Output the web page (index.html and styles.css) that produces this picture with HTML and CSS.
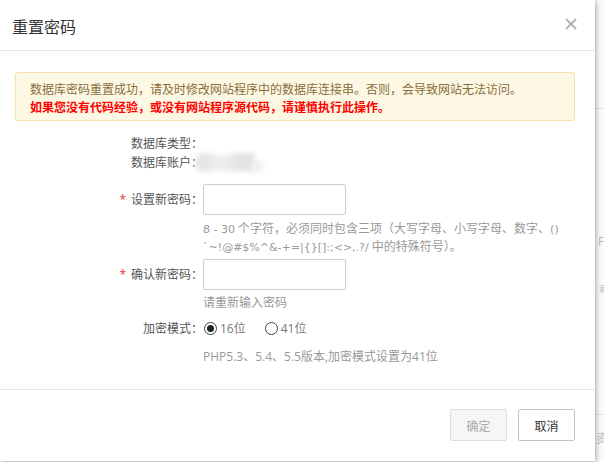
FILE: index.html
```html
<!DOCTYPE html>
<html lang="zh-CN">
<head>
<meta charset="utf-8">
<link rel="stylesheet" href="styles.css">
</head>
<body>
<div class="backdrop">
  <div class="bg-lines">
    <span class="bg-text t1">F</span>
    <span class="bg-text t2">索</span>
    <span class="bg-text t3">资</span>
  </div>
  <div class="dialog">
    <div class="header">
      <span class="title">重置密码</span>
      <svg class="close" width="12" height="12" viewBox="0 0 12 12"><path d="M1 1L11 11M11 1L1 11" stroke="#b5b5b5" stroke-width="2"/></svg>
    </div>
    <div class="body">
      <div class="alert">
        <p>数据库密码重置成功，请及时修改网站程序中的数据库连接串。否则，会导致网站无法访问。</p>
        <p class="warn">如果您没有代码经验，或没有网站程序源代码，请谨慎执行此操作。</p>
      </div>
      <div class="form">
        <div class="row r1"><span class="label">数据库类型：</span></div>
        <div class="row r2"><span class="label">数据库账户：</span><span class="blur"><i class="b1"></i><i class="b2"></i><i class="b3"></i><i class="b4"></i></span></div>
        <div class="row r3"><span class="label"><em>*</em>设置新密码：</span><span class="input"></span></div>
        <div class="help h1"><span class="lat">8 - 30</span> 个字符，必须同时包含三项（大写字母、小写字母、数字、<span class="lat">()</span><br><span class="lat">`~!@#$%^&amp;-+=|{}[]:;&lt;&gt;,.?/</span> 中的特殊符号）。</div>
        <div class="row r4"><span class="label"><em>*</em>确认新密码：</span><span class="input"></span></div>
        <div class="help h2">请重新输入密码</div>
        <div class="row r5"><span class="label">加密模式：</span>
          <span class="radio on"></span><span class="rtext">16位</span>
          <span class="radio r41"></span><span class="rtext">41位</span>
        </div>
        <div class="help h3">PHP5.3、5.4、5.5版本,加密模式设置为41位</div>
      </div>
    </div>
    <div class="footer">
      <button class="btn disabled">确定</button>
      <button class="btn">取消</button>
    </div>
  </div>
</div>
</body>
</html>
```

FILE: styles.css
```css
* { box-sizing: border-box; margin: 0; padding: 0; }
html, body { width: 604px; height: 462px; overflow: hidden; }
body {
  background: #fff;
  font-family: "Open Sans", "Noto Sans CJK SC", sans-serif;
  font-size: 12px;
  color: #555;
}
.backdrop { position: relative; width: 604px; height: 462px; background: #fafafa; }
.bg-lines { position: absolute; left: 595px; top: 0; width: 9px; height: 462px; overflow: hidden; }
.bg-lines::before { content: ""; position: absolute; left: 0; right: 0; top: 108px; border-top: 1px solid #e3e3e3; }
.bg-lines::after { content: ""; position: absolute; left: 0; right: 0; top: 414px; border-top: 1px solid #e3e3e3; }
.bg-text { position: absolute; color: #bbb; font-size: 12px; line-height: 14px; }
.t1 { left: 3px; top: 235px; }
.t2 { left: 4px; top: 282px; font-size: 8px; }
.t3 { left: 1px; top: 432px; }
.dialog {
  position: absolute; left: 0; top: 0;
  width: 595px; height: 461px;
  background: #fff;
  display: flex; flex-direction: column;
  box-shadow: 1px 1px 5px rgba(0,0,0,0.35);
}
.header {
  height: 51px;
  padding: 0 18px 0 12px;
  border-bottom: 1px solid #e5e5e5;
  display: flex; align-items: center; justify-content: space-between;
  font-family: "Noto Sans CJK SC", sans-serif;
}
.title { font-size: 16px; color: #333; line-height: 20px; margin-top: 1px; }
.close { display: block; margin-top: -2px; }
.body { flex: 1; padding: 21px 20px 0 15px; }
.alert {
  background: #fdf8e4;
  border: 1px solid #f7e1a9;
  border-radius: 3px;
  padding: 7px 14px 4px;
  line-height: 18px;
  color: #8a6d3b;
  font-family: "Noto Sans CJK SC", sans-serif;
}
.alert .warn { color: #f00; font-weight: bold; }
.row { display: flex; align-items: center; }
.label { width: 188px; text-align: right; color: #555; line-height: 19px; flex: none; }
.label em { font-style: normal; color: #e33; margin-right: 5px; }
.r1 { margin-top: 13px; }
.r2 { height: 19px; }
.r3 { margin-top: 12px; }
.r4 { margin-top: 3px; }
.input {
  display: block; width: 143px; height: 31px;
  border: 1px solid #ccc; border-radius: 2px; background: #fff;
}
.help { margin-left: 188px; color: #999; line-height: 18px; height: auto; }
.help .lat { font-family: "DejaVu Sans", sans-serif; font-size: 11px; line-height: 1; }
.h1 { margin-top: 5px; height: 36px; }
.h2 { margin-top: 4px; }
.h3 { margin-top: 10px; }
.r5 { margin-top: 7px; }
.blur { position: relative; display: block; width: 70px; height: 19px; margin-left: -8px; }
.blur i { position: absolute; display: block; filter: blur(2.5px); }
.b1 { left: 0; top: 0; width: 20px; height: 19px; border-radius: 8px; background: #e6e6e6; }
.b2 { left: 16px; top: 2px; width: 26px; height: 16px; background: #ececec; }
.b3 { left: 38px; top: 0; width: 22px; height: 18px; background: #e2e2e2; }
.b4 { left: 56px; top: 8px; width: 12px; height: 10px; background: #f0f0f0; }
.radio {
  width: 13px; height: 13px; border: 1px solid #444; border-radius: 50%;
  position: relative; flex: none; margin-left: 1px;
}
.radio.on::after {
  content: ""; position: absolute; left: 2px; top: 2px; width: 7px; height: 7px;
  border-radius: 50%; background: #222;
}
.r41 { margin-left: 19px; }
.rtext { margin-left: 3px; color: #777; line-height: 18px; }
.footer {
  height: 72px;
  border-top: 1px solid #e5e5e5;
  display: flex; justify-content: flex-end; align-items: flex-start;
  padding: 19px 20px 0 0; gap: 11px;
}
.btn {
  width: 57px; height: 32px;
  border: 1px solid #c4c4c4; border-radius: 2px;
  background: #fff; color: #333;
  font-family: "Noto Sans CJK SC", sans-serif; font-size: 12px;
}
.btn.disabled { background: #f6f6f6; color: #aaa; border-color: #ddd; }
```
